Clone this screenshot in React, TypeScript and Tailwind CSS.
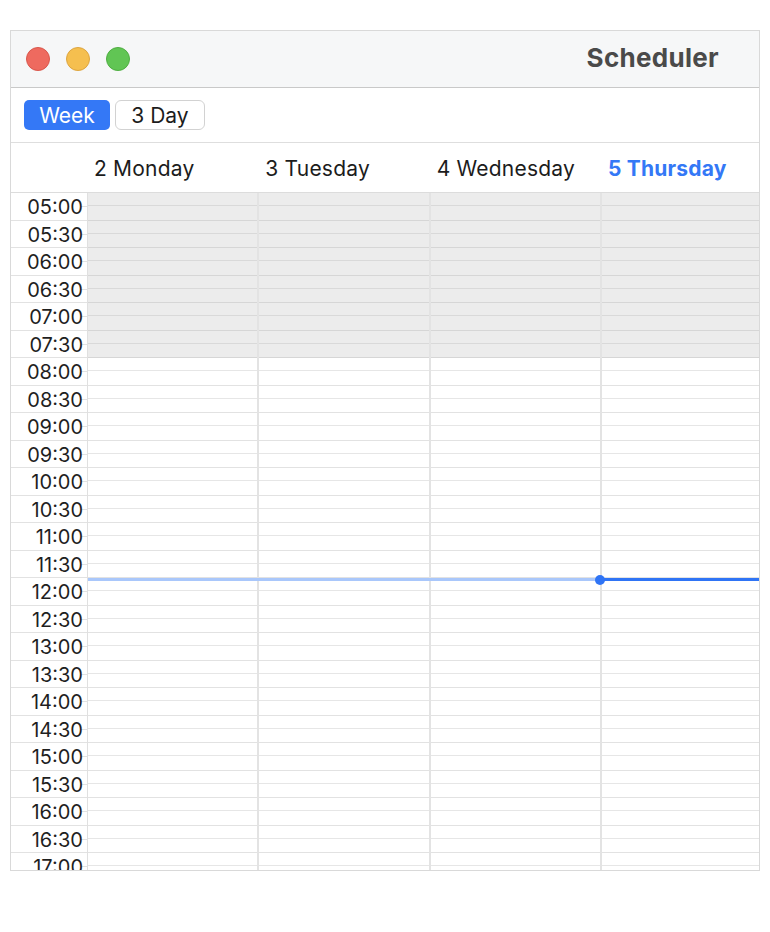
import React from 'react';

const days = [
  { label: '2 Monday', today: false },
  { label: '3 Tuesday', today: false },
  { label: '4 Wednesday', today: false },
  { label: '5 Thursday', today: true },
];

// half-hour slots from 05:00 to 17:00
const slots: string[] = [];
for (let h = 5; h <= 17; h++) {
  slots.push(`${String(h).padStart(2, '0')}:00`);
  if (h < 17) slots.push(`${String(h).padStart(2, '0')}:30`);
}

const isOffHours = (i: number) => i < 6;

function TrafficLights() {
  return (
    <div className="flex items-center gap-[16px]">
      <span className="size-[24px] rounded-full bg-[#ee6a5f] border border-[#d9574c]" />
      <span className="size-[24px] rounded-full bg-[#f5bf4f] border border-[#dda540]" />
      <span className="size-[24px] rounded-full bg-[#61c554] border border-[#4fae42]" />
    </div>
  );
}

function TimeColumn() {
  return (
    <div className="flex w-[77px] flex-none flex-col border-r border-[#e0e0e0] bg-white">
      {slots.map((t) => (
        <div key={t} className="relative flex h-[27.5px] flex-none items-center justify-end border-b border-[#e2e2e2] pr-[4px] pt-[2px]">
          <span className="absolute right-0 top-[13px] h-px w-[6px] bg-[#e2e2e2]" />
          <span className="relative text-[20px] leading-none text-[#1f1f1f]">{t}</span>
        </div>
      ))}
    </div>
  );
}

function DayColumn() {
  return (
    <div className="flex w-[171.33px] flex-none flex-col border-r-2 border-[#e3e3e3]">
      {slots.map((t, i) => (
        <div
          key={t}
          className={`flex h-[27.5px] flex-none flex-col border-b ${isOffHours(i) ? 'border-[#d6d6d6] bg-[#ececec]' : 'border-[#e2e2e2] bg-white'}`}
        >
          <div className={`h-[13px] flex-none border-b ${isOffHours(i) ? 'border-[#d9d9d9]' : 'border-[#e6e6e6]'}`} />
        </div>
      ))}
    </div>
  );
}

export default function App() {
  return (
    <div className="min-h-screen bg-white px-[10px] pt-[30px] font-['Inter',sans-serif]">
      <div className="flex h-[841px] w-[750px] flex-col overflow-hidden border border-[#d9d9d9] bg-white">
        {/* title bar */}
        <div className="flex h-[57px] flex-none items-center justify-between border-b border-[#c9c9c9] bg-[#f6f7f8] pl-[15px] pr-[40px]">
          <TrafficLights />
          <span className="mb-[4px] text-[26px] font-bold tracking-[0.3px] text-[#4a4a4a]">Scheduler</span>
        </div>

        {/* view switch */}
        <div className="flex h-[55px] flex-none items-center gap-[5px] border-b border-[#dedede] pl-[13px]">
          <button className="flex h-[30px] w-[86px] items-center justify-center rounded-[5px] bg-[#3478f6] pt-[2px] text-[21px] text-white">
            Week
          </button>
          <button className="flex h-[30px] w-[90px] items-center justify-center rounded-[6px] border border-[#d2d2d2] bg-white pt-[2px] text-[21px] text-[#1c1c1c]">
            3 Day
          </button>
        </div>

        {/* day header */}
        <div className="flex h-[50px] flex-none items-center overflow-hidden border-b border-[#dcdcdc] bg-white pt-[3px]">
          <div className="w-[77px] flex-none" />
          {days.map((d) => (
            <div key={d.label} className="w-[171.33px] flex-none pl-[6px]">
              <span className={`text-[21px] tracking-[0.2px] ${d.today ? 'font-bold text-[#3478f6]' : 'text-[#1c1c1c]'}`}>{d.label}</span>
            </div>
          ))}
        </div>

        {/* grid */}
        <div className="relative flex min-h-0 flex-1 overflow-hidden">
          <TimeColumn />
          {days.map((d) => (
            <DayColumn key={d.label} />
          ))}
          <DayColumn />
          {/* current time indicator */}
          <div className="absolute left-[77px] top-[385px] h-[3px] w-[512px] bg-[#a9c7fb]" />
          <div className="absolute left-[589px] top-[385px] h-[3px] w-[200px] bg-[#2f74f5]" />
          <div className="absolute left-[584px] top-[381.5px] size-[10px] rounded-full bg-[#2f74f5]" />
        </div>
      </div>
    </div>
  );
}
